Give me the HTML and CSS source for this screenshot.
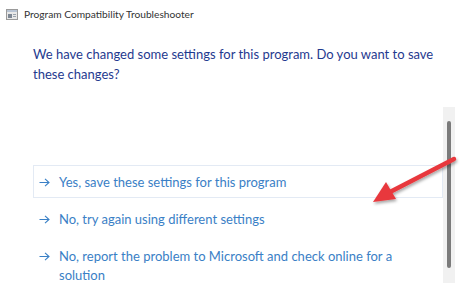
FILE: index.html
```html
<!DOCTYPE html>
<html>
<head>
<meta charset="utf-8">
<link rel="stylesheet" href="styles.css">
</head>
<body>
<div class="window">
  <div class="titlebar">
    <svg class="appicon" width="12" height="11" viewBox="0 0 12 11">
      <rect x="0.5" y="0.5" width="11" height="10" fill="#e8e8e8" stroke="#9a9a9a"/>
      <rect x="1" y="1" width="10" height="2" fill="#b8c4d4"/>
      <rect x="2" y="5" width="4" height="4" fill="#7d8794"/>
      <rect x="7" y="5" width="3" height="1" fill="#9aa3ad"/>
      <rect x="7" y="7" width="3" height="1" fill="#9aa3ad"/>
    </svg>
    <span class="title">Program Compatibility Troubleshooter</span>
  </div>
  <p class="heading">We have changed some settings for this program. Do you want to save these changes?</p>
  <div class="main">
    <div class="options">
      <div class="option selected">
        <svg class="arr" width="11" height="9" viewBox="0 0 11 9"><path d="M0.5 4.5H10M6 0.8L10 4.5L6 8.2" fill="none" stroke="currentColor" stroke-width="1.1"/></svg>
        <span class="label">Yes, save these settings for this program</span>
      </div>
      <div class="option">
        <svg class="arr" width="11" height="9" viewBox="0 0 11 9"><path d="M0.5 4.5H10M6 0.8L10 4.5L6 8.2" fill="none" stroke="currentColor" stroke-width="1.1"/></svg>
        <span class="label">No, try again using different settings</span>
      </div>
      <div class="option">
        <svg class="arr" width="11" height="9" viewBox="0 0 11 9"><path d="M0.5 4.5H10M6 0.8L10 4.5L6 8.2" fill="none" stroke="currentColor" stroke-width="1.1"/></svg>
        <span class="label">No, report the problem to Microsoft and check online for a solution</span>
      </div>
    </div>
    <div class="scrollbar"><div class="thumb"></div></div>
  </div>
  <svg class="annotation" width="474" height="285" viewBox="0 0 474 285">
    <defs>
      <filter id="sh" x="-20%" y="-20%" width="140%" height="140%">
        <feDropShadow dx="1" dy="2" stdDeviation="1.5" flood-color="#000" flood-opacity="0.35"/>
      </filter>
    </defs>
    <g filter="url(#sh)">
      <line x1="454" y1="159" x2="390" y2="192" stroke="#e8383d" stroke-width="4.5" stroke-linecap="round"/>
      <polygon points="373,202 386,182 396,199" fill="#e8383d"/>
    </g>
  </svg>
</div>
</body>
</html>
```
FILE: styles.css
```css
html, body {
  margin: 0;
  padding: 0;
  background: #ffffff;
}
.window {
  position: relative;
  width: 474px;
  height: 285px;
  overflow: hidden;
  font-family: Lato, "Open Sans", sans-serif;
}
.titlebar {
  display: flex;
  align-items: center;
  gap: 6px;
  height: 28px;
  padding-left: 6px;
}
.appicon {
  display: block;
}
.title {
  font-size: 10.2px;
  color: #333333;
}
.heading {
  margin: 16px 30px 0 33px;
  height: 40px;
  font-size: 13px;
  line-height: 20px;
  color: #1f3a8f;
}
.main {
  display: flex;
  margin-top: 23px;
  height: 176px;
}
.options {
  flex: 1;
  padding-left: 33px;
  padding-top: 58px;
}
.option {
  display: flex;
  align-items: flex-start;
  gap: 9px;
  padding: 7px 8px 5px 5px;
  margin-bottom: 4px;
  border: 1px solid transparent;
  font-size: 13px;
  line-height: 19px;
  color: #3a80c6;
}
.option.selected {
  border-color: #e3eaf4;
}
.arr {
  flex: none;
  margin-top: 5px;
}
.label {
  max-width: 345px;
}
.scrollbar {
  flex: none;
  width: 12px;
  margin-right: 19px;
  background: #f1f1f1;
  display: flex;
  justify-content: center;
  padding-top: 14px;
  padding-bottom: 15px;
}
.thumb {
  width: 4px;
  background: #7b7b7b;
  border-radius: 2px;
}
.annotation {
  position: absolute;
  left: 0;
  top: 0;
  pointer-events: none;
}
```
